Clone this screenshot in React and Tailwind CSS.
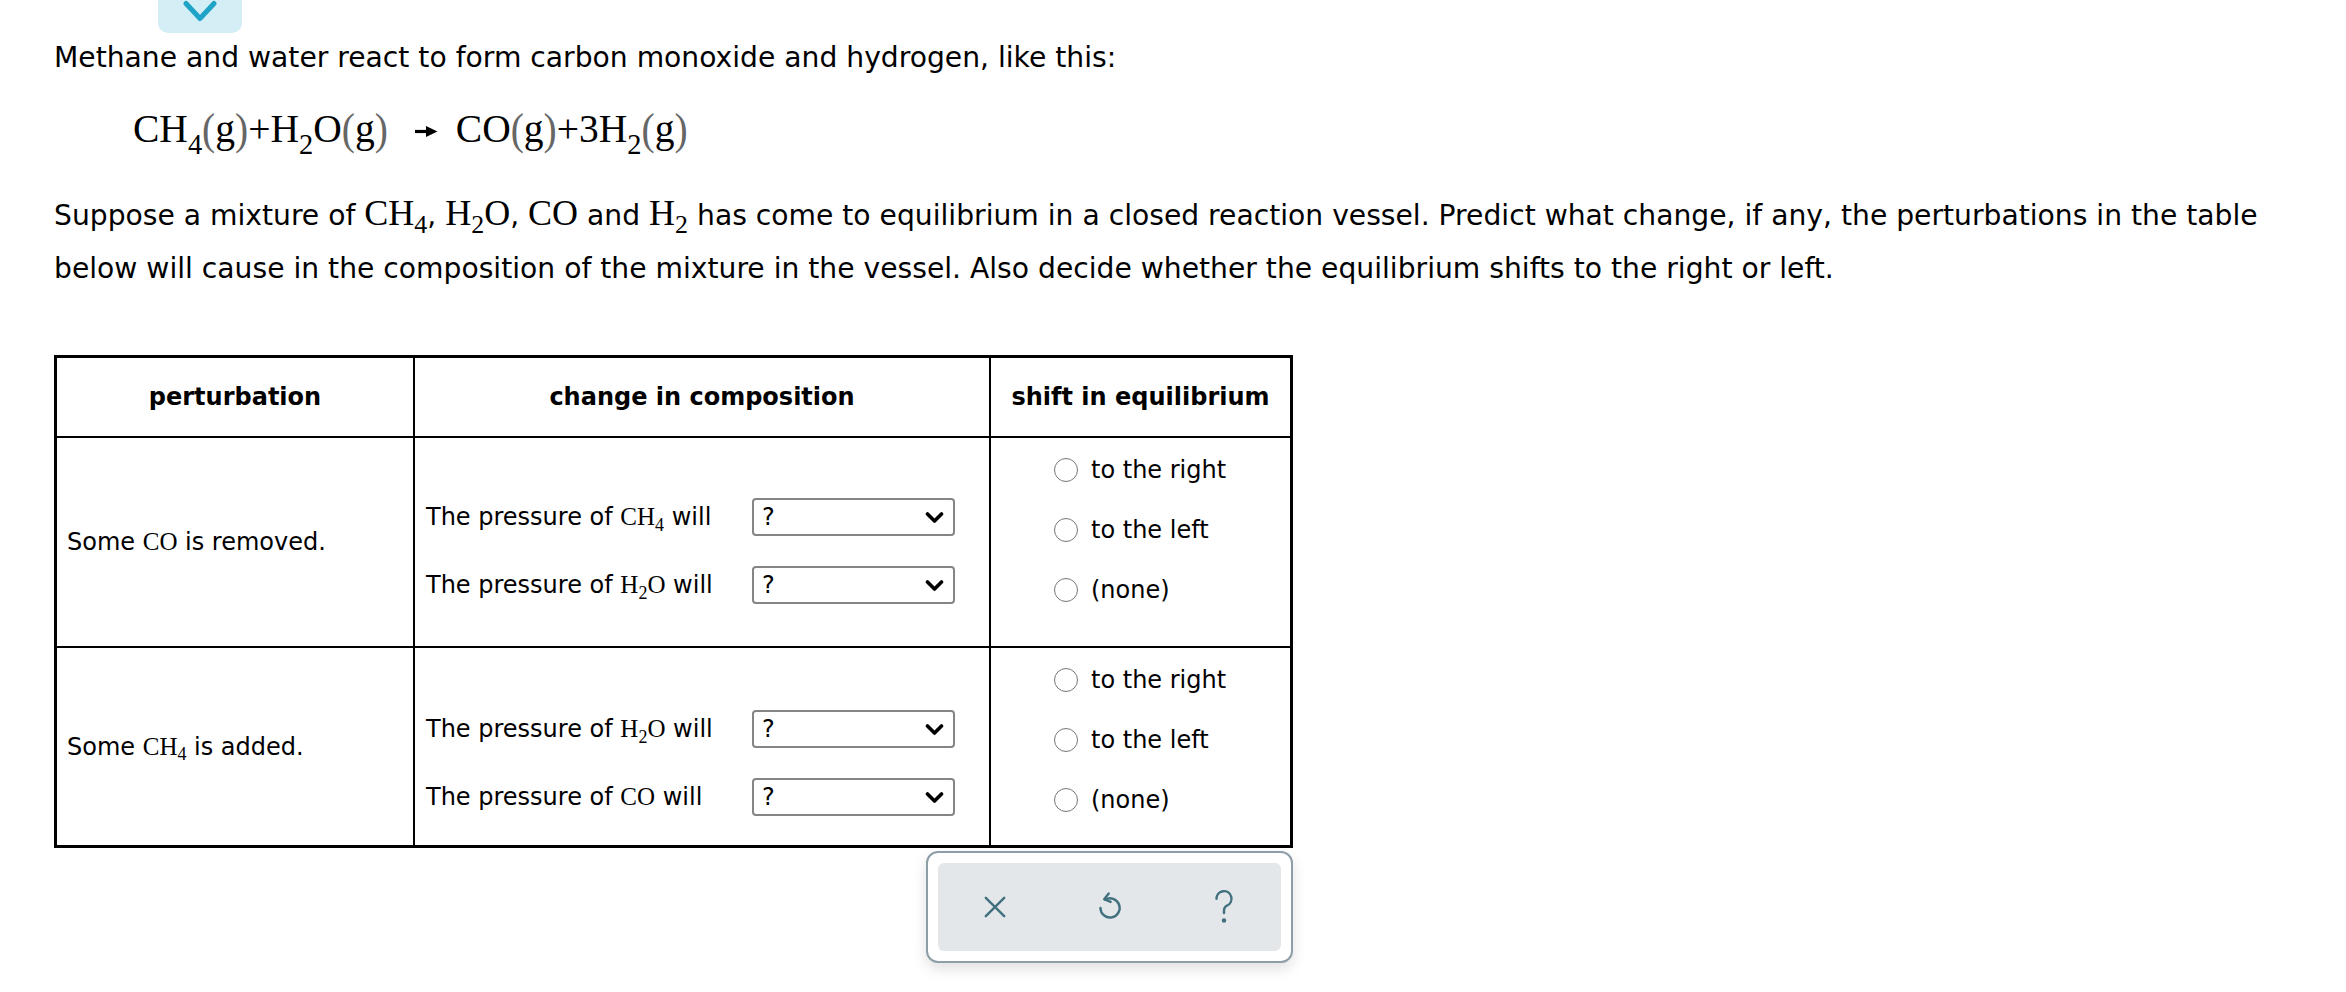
import React from "react";

const SERIF = "font-['Liberation_Serif',serif]";

function Sub({ children }) {
  return <sub className="text-[72%] bottom-[-0.3em]">{children}</sub>;
}

function EqSub({ children }) {
  return <sub className="text-[72%] bottom-[-0.42em]">{children}</sub>;
}

function Paren({ children }) {
  return <span className="inline-block scale-y-[1.12] text-[#666]">{children}</span>;
}

function Pick() {
  return (
    <div className="flex h-[38px] w-[203px] items-center justify-between rounded-[4px] border-2 border-[#858585] pl-[8px] pr-[9px]">
      <span className="text-[24px] leading-none">?</span>
      <svg width="19" height="13" viewBox="0 0 19 13">
        <path d="M2.5 3l7 7 7-7" stroke="#000" strokeWidth="3.6" fill="none" strokeLinecap="round" strokeLinejoin="round" />
      </svg>
    </div>
  );
}

function Radios() {
  return (
    <div className="flex flex-col pt-[2px] pl-[63px] text-[24px]">
      {["to the right", "to the left", "(none)"].map((t) => (
        <div key={t} className="flex h-[60px] items-center">
          <span className="mr-[13px] h-[24px] w-[24px] rounded-full border-[1.5px] border-[#767676] bg-white"></span>
          <span>{t}</span>
        </div>
      ))}
    </div>
  );
}

function Changes({ rows, top }) {
  return (
    <div className={"flex flex-col gap-[30px] pl-[11px] text-[24px] " + top}>
      {rows.map((r, i) => (
        <div key={i} className="flex h-[38px] items-center">
          <span className="w-[326px]">
            The pressure of <span className={SERIF + " text-[25px]"}>{r}</span> will
          </span>
          <Pick />
        </div>
      ))}
    </div>
  );
}

export default function App() {
  return (
    <div className="min-h-[992px] w-full bg-white pl-[54px] font-['DejaVu_Sans',sans-serif] text-black">
      <div className="ml-[104px] flex h-[33px] w-[84px] items-start justify-center rounded-b-[10px] bg-[#d4eef5]">
        <svg width="36" height="24" viewBox="0 0 36 24">
          <path d="M4 3.5l14 15 14-15" stroke="#1fa3c6" strokeWidth="5" fill="none" strokeLinecap="round" strokeLinejoin="round" />
        </svg>
      </div>

      <p className="mt-[8px] text-[28.2px] leading-[34px]">
        Methane and water react to form carbon monoxide and hydrogen, like this:
      </p>

      <div className={"ml-[79px] mt-[24px] flex h-[60px] items-center text-[39.5px] leading-[60px] " + SERIF}>
        <span>
          CH<EqSub>4</EqSub><Paren>(</Paren>g<Paren>)</Paren>+H<EqSub>2</EqSub>O<Paren>(</Paren>g<Paren>)</Paren>
        </span>
        <svg width="24" height="13" viewBox="0 0 24 13" className="ml-[26px] mr-[18px] mt-[4px]">
          <path d="M1 6.5h14" stroke="#000" strokeWidth="3.2" />
          <path d="M12 1L23.5 6.5 12 12z" fill="#000" />
        </svg>
        <span>
          CO<Paren>(</Paren>g<Paren>)</Paren>+3H<EqSub>2</EqSub><Paren>(</Paren>g<Paren>)</Paren>
        </span>
      </div>

      <p className="mt-[30px] whitespace-nowrap text-[28.2px] leading-[53px]">
        Suppose a mixture of{" "}
        <span className={SERIF + " text-[36px] leading-none"}>
          CH<Sub>4</Sub>
        </span>
        ,{" "}
        <span className={SERIF + " text-[36px] leading-none"}>
          H<Sub>2</Sub>O
        </span>
        ,{" "}
        <span className={SERIF + " text-[36px] leading-none"}>CO</span> and{" "}
        <span className={SERIF + " text-[36px] leading-none"}>
          H<Sub>2</Sub>
        </span>{" "}
        has come to equilibrium in a closed reaction vessel. Predict what change, if any, the perturbations in the table
        <br />
        below will cause in the composition of the mixture in the vessel. Also decide whether the equilibrium shifts to the right or left.
      </p>

      <div className="mt-[60px] w-[1239px]">
        <div className="grid grid-cols-[356px_576px_301px] border-[3px] border-black text-[24px]">
          <div className="flex h-[78px] items-center justify-center font-bold">perturbation</div>
          <div className="flex h-[78px] items-center justify-center border-l-2 border-black font-bold">change in composition</div>
          <div className="flex h-[78px] items-center justify-center border-l-2 border-black font-bold">shift in equilibrium</div>

          <div className="flex h-[210px] items-center border-t-2 border-black pl-[10px]">
            <span>
              Some <span className={SERIF + " text-[25px]"}>CO</span> is removed.
            </span>
          </div>
          <div className="h-[210px] border-l-2 border-t-2 border-black">
            <Changes rows={[<>CH<Sub>4</Sub></>, <>H<Sub>2</Sub>O</>]} top="pt-[60px]" />
          </div>
          <div className="h-[210px] border-l-2 border-t-2 border-black">
            <Radios />
          </div>

          <div className="flex h-[199px] items-center border-t-2 border-black pl-[10px]">
            <span>
              Some <span className={SERIF + " text-[25px]"}>CH<Sub>4</Sub></span> is added.
            </span>
          </div>
          <div className="h-[199px] border-l-2 border-t-2 border-black">
            <Changes rows={[<>H<Sub>2</Sub>O</>, <>CO</>]} top="pt-[62px]" />
          </div>
          <div className="h-[199px] border-l-2 border-t-2 border-black">
            <Radios />
          </div>
        </div>

        <div className="flex justify-end">
          <div className="mt-[3px] h-[112px] w-[367px] rounded-[12px] border-2 border-[#8d9ea6] bg-white p-[10px] shadow-[0_6px_14px_rgba(0,0,0,0.12)]">
            <div className="grid h-full grid-cols-3 items-center rounded-[6px] bg-[#e3e7ea]">
              <div className="flex justify-center">
                <svg width="34" height="34" viewBox="0 0 24 24" fill="none" stroke="#41707e" strokeWidth="1.7" strokeLinecap="round">
                  <path d="M5.5 5.5l13 13M18.5 5.5l-13 13" />
                </svg>
              </div>
              <div className="flex justify-center">
                <svg width="36" height="36" viewBox="0 0 24 24" fill="none" stroke="#41707e" strokeWidth="1.6" strokeLinecap="round" strokeLinejoin="round">
                  <path d="M11.8 3L8.8 6.8l4.3 1.8" />
                  <path d="M9.4 7.1A6.4 6.4 0 1 1 6.3 12.6" />
                </svg>
              </div>
              <div className="flex justify-center">
                <svg width="36" height="40" viewBox="0 0 24 26" fill="none" stroke="#41707e" strokeWidth="1.6" strokeLinecap="round">
                  <path d="M7 7.5a5 5 0 1 1 7.1 4.5c-1.4.7-2.1 1.7-2.1 3.1V17" />
                  <circle cx="12" cy="22" r="0.7" fill="#41707e" />
                </svg>
              </div>
            </div>
          </div>
        </div>
      </div>
    </div>
  );
}
